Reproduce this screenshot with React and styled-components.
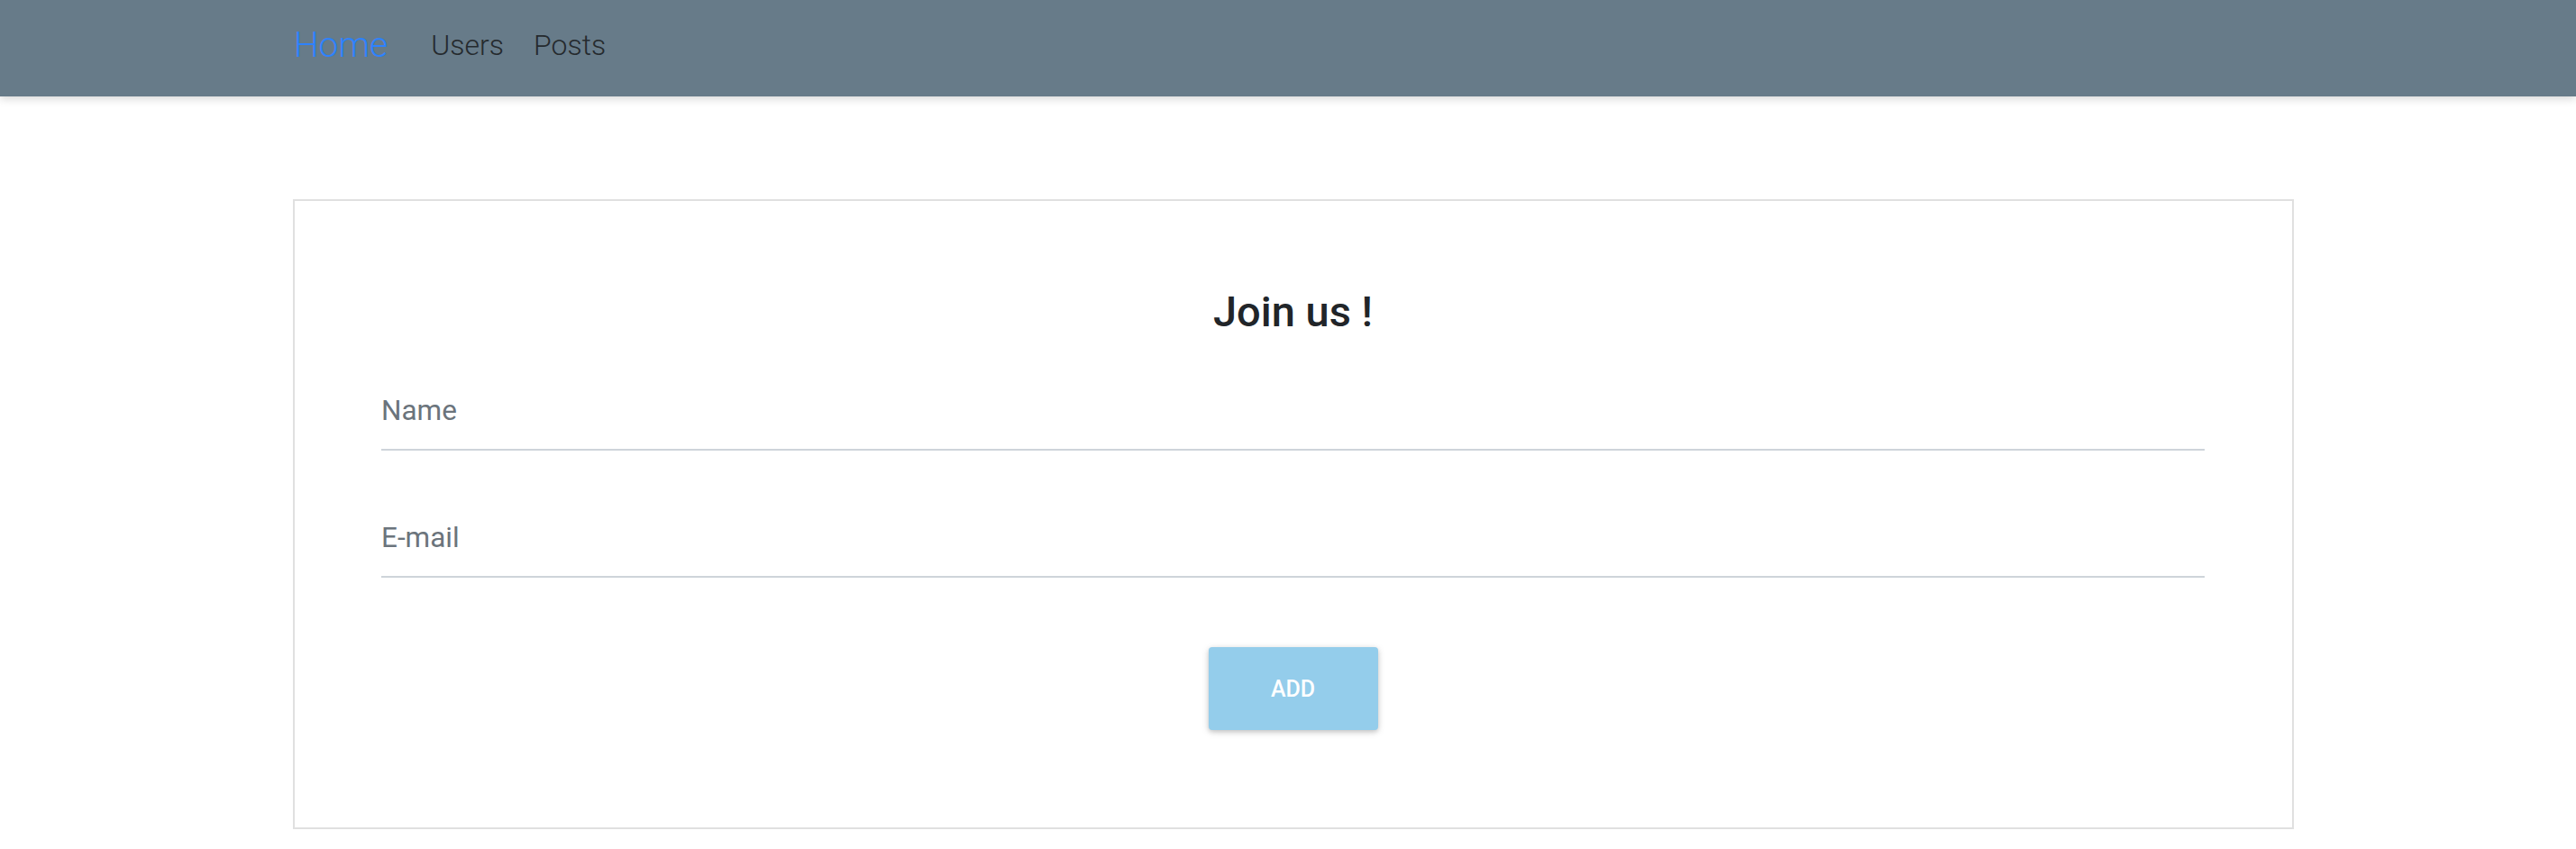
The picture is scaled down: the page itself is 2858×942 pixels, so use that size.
import React from "react";
import styled, { createGlobalStyle } from "styled-components";

const Global = createGlobalStyle`
  html, body { margin: 0; padding: 0; background: #ffffff; }
  body { font-family: Roboto, "Noto Sans", "Liberation Sans", sans-serif; }
  * { box-sizing: border-box; }
`;

const NavBar = styled.nav`
  height: 107px;
  background: #677b89;
  box-shadow: 0 2px 10px rgba(0, 0, 0, 0.18);
  display: flex;
  align-items: center;
  padding: 0 0 7px 326px;
`;

const NavLink = styled.a`
  font-family: Roboto, sans-serif;
  font-weight: 300;
  font-size: ${(p) => (p.$brand ? "39px" : "32px")};
  color: ${(p) => (p.$brand ? "#2d82ff" : "#252a2e")};
  text-decoration: none;
  margin-right: ${(p) => (p.$brand ? "48px" : "33px")};
  line-height: 1;
  cursor: pointer;
`;

const Page = styled.main`
  padding: 114px 313px 0 325px;
`;

const Card = styled.section`
  border: 2px solid #e0e0e0;
  padding: 95px 97px 108px 96px;
  display: flex;
  flex-direction: column;
  align-items: stretch;
`;

const Title = styled.h3`
  margin: 0 0 40px;
  font-size: 47px;
  font-weight: 500;
  line-height: 1.2;
  color: #212529;
  text-align: center;
`;

const Field = styled.input`
  display: block;
  width: 100%;
  height: 86px;
  margin: 0 0 ${(p) => p.$gap || 0}px;
  padding: 0 0 2px;
  border: none;
  border-bottom: 2px solid #ced4da;
  background: transparent;
  font-family: Roboto, sans-serif;
  font-size: 31.5px;
  color: #495057;
  outline: none;
  &::placeholder { color: #6b747c; opacity: 1; }
`;

const Actions = styled.div`
  display: flex;
  justify-content: center;
`;

const AddButton = styled.button`
  width: 188px;
  height: 92px;
  border: none;
  border-radius: 4px;
  background: #94cdeb;
  color: #ffffff;
  font-family: Roboto, sans-serif;
  font-weight: 500;
  font-size: 25px;
  text-transform: uppercase;
  box-shadow: 0 2px 5px rgba(0, 0, 0, 0.16), 0 2px 10px rgba(0, 0, 0, 0.12);
  cursor: pointer;
`;

export default function App() {
  return (
    <>
      <Global />
      <NavBar>
        <NavLink $brand>Home</NavLink>
        <NavLink>Users</NavLink>
        <NavLink>Posts</NavLink>
      </NavBar>
      <Page>
        <Card>
          <Title>Join us !</Title>
          <Field placeholder="Name" $gap={55} />
          <Field placeholder="E-mail" $gap={77} />
          <Actions>
            <AddButton>Add</AddButton>
          </Actions>
        </Card>
      </Page>
    </>
  );
}
